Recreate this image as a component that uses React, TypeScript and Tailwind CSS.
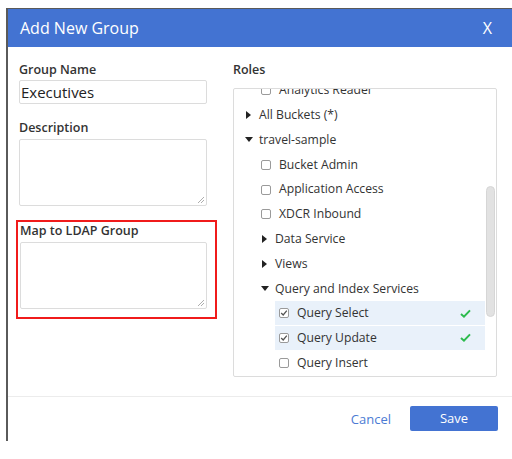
import React from "react";

type Row = {
  label: string;
  level: number;
  kind: "check" | "open" | "closed";
  checked?: boolean;
  active?: boolean;
};

const ROWS: Row[] = [
  { label: "Analytics Reader", level: 1, kind: "check" },
  { label: "All Buckets (*)", level: 0, kind: "closed" },
  { label: "travel-sample", level: 0, kind: "open" },
  { label: "Bucket Admin", level: 1, kind: "check" },
  { label: "Application Access", level: 1, kind: "check" },
  { label: "XDCR Inbound", level: 1, kind: "check" },
  { label: "Data Service", level: 1, kind: "closed" },
  { label: "Views", level: 1, kind: "closed" },
  { label: "Query and Index Services", level: 1, kind: "open" },
  { label: "Query Select", level: 2, kind: "check", checked: true, active: true },
  { label: "Query Update", level: 2, kind: "check", checked: true, active: true },
  { label: "Query Insert", level: 2, kind: "check" },
];

const INDENT = ["pl-[11px]", "pl-[27px]", "pl-[45px]"];

function Checkbox({ checked }: { checked?: boolean }) {
  return (
    <span className="flex h-[10px] w-[10px] shrink-0 items-center justify-center rounded-[2px] border border-[#9a9a9a] bg-white">
      {checked && (
        <svg viewBox="0 0 10 10" className="h-[8px] w-[8px]">
          <path d="M1.5 5 L4 7.5 L8.5 2" fill="none" stroke="#555" strokeWidth="1.6" />
        </svg>
      )}
    </span>
  );
}

function Caret({ open }: { open: boolean }) {
  return open ? (
    <svg viewBox="0 0 8 5" className="h-[5px] w-[8px] shrink-0">
      <path d="M0 0 H8 L4 5 Z" fill="#222" />
    </svg>
  ) : (
    <svg viewBox="0 0 5 8" className="ml-[1px] mr-[2px] h-[8px] w-[5px] shrink-0">
      <path d="M0 0 V8 L5 4 Z" fill="#222" />
    </svg>
  );
}

function RoleRow({ row }: { row: Row }) {
  const isCheck = row.kind === "check";
  return (
    <div
      className={
        "flex h-[24.8px] items-center " +
        INDENT[row.level] +
        (row.active ? " ml-[41px] mr-[11px] border-b border-white bg-[#e9f1fa] !pl-[4px] pr-[14px]" : "")
      }
    >
      {isCheck ? <Checkbox checked={row.checked} /> : <Caret open={row.kind === "open"} />}
      <span className={isCheck ? "ml-[8px]" : "ml-[6px]"}>{row.label}</span>
      {row.active && (
        <svg viewBox="0 0 12 10" className="ml-auto h-[9px] w-[11px]">
          <path d="M1 5.5 L4.3 8.5 L11 1.5" fill="none" stroke="#2dbb4e" strokeWidth="2.2" />
        </svg>
      )}
    </div>
  );
}

export default function App() {
  return (
    <div
      className="h-[459px] w-[512px] overflow-hidden bg-white pl-[6px] pt-[8px] text-[#333]"
      style={{ fontFamily: '"Open Sans", "Noto Sans", sans-serif' }}
    >
      <div className="h-[433px] border-l-2 border-t border-[#5a5a5a]">
        {/* header */}
        <div className="flex h-[38px] items-center justify-between bg-[#4373d2] pl-[12px] pr-[20px] text-white">
          <span className="text-[16px]">Add New Group</span>
          <span className="text-[16px]">X</span>
        </div>

        {/* body */}
        <div className="flex h-[349px] pl-[11px] pt-[14px]">
          <div className="flex w-[188px] flex-col">
            <label className="h-[18px] text-[12.5px] font-semibold leading-[18px]">Group Name</label>
            <div className="mt-[1px] flex h-[24px] items-center rounded-[2px] border border-[#dcdcdc] pl-[1px] text-[15px] text-[#222]">
              Executives
            </div>
            <label className="mt-[15px] h-[18px] text-[12.5px] font-semibold leading-[18px]">Description</label>
            <div className="relative mt-[2px] h-[67px] rounded-[2px] border border-[#dcdcdc]">
              <Grip />
            </div>
            <div className="-ml-[3px] mt-[14px] w-[201px] border-2 border-[#f01b1b] pb-[8px] pl-[2px]">
              <label className="block h-[18px] text-[12.5px] font-semibold leading-[18px]">Map to LDAP Group</label>
              <div className="relative mt-[2px] h-[67px] w-[187px] rounded-[2px] border border-[#dcdcdc]">
                <Grip />
              </div>
            </div>
          </div>

          <div className="ml-[26px] flex w-[264px] flex-col">
            <label className="h-[18px] text-[12.5px] font-semibold leading-[18px]">Roles</label>
            <div className="relative mt-[9px] h-[289px] overflow-hidden rounded-[2px] border border-[#dcdcdc] text-[12.2px] text-[#333]">
              <div className="-mt-[11px]">
                {ROWS.map((row) => (
                  <RoleRow key={row.label} row={row} />
                ))}
              </div>
              <div className="absolute right-[1px] top-[97px] h-[131px] w-[9px] rounded-full border border-[#d6d6d6] bg-[#e2e2e2]" />
            </div>
          </div>
        </div>

        {/* footer */}
        <div className="flex h-[44px] items-start justify-end border-t border-[#ececec] pr-[14px] pt-[9px]">
          <span className="mr-[19px] mt-[4px] text-[13px] text-[#4b7bd4]">Cancel</span>
          <button className="h-[25px] w-[88px] rounded-[2px] bg-[#4373d2] text-[13px] text-white">Save</button>
        </div>
      </div>
    </div>
  );
}

function Grip() {
  return (
    <svg viewBox="0 0 6 6" className="absolute bottom-[2px] right-[2px] h-[6px] w-[6px]">
      <path d="M0 6 L6 0 M3 6 L6 3" stroke="#999" strokeWidth="0.8" />
    </svg>
  );
}
